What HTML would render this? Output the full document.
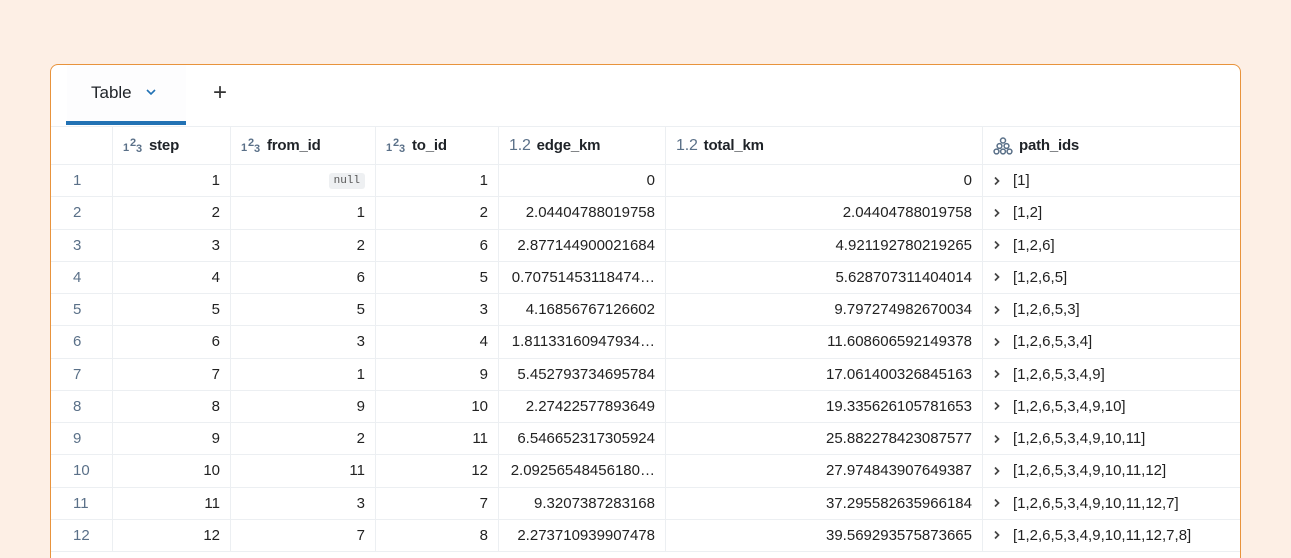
<!DOCTYPE html>
<html><head><style>
*{box-sizing:border-box;margin:0;padding:0}
html{width:1291px;height:558px;overflow:hidden}
body{width:1291px;height:558px;background:#fdefe5;overflow:hidden;font-family:"Liberation Sans",sans-serif;position:relative}
.card{position:absolute;left:50px;top:64px;width:1191px;height:520px;background:#fff;border:1px solid #e8933c;border-radius:8px;overflow:hidden}
.tab{position:absolute;left:16px;top:0;width:119px;height:60px;background:#fdfdfe}
.tab span{position:absolute;left:24px;top:18px;font-size:17px;color:#1f2328}
.tab svg{position:absolute;left:78px;top:23px}
.ul{position:absolute;left:15px;top:56px;width:120px;height:4px;background:#2272b4}
.plus{position:absolute;left:162px;top:14px;font-size:24px;color:#333}
.grid{position:absolute;left:0;top:61px;width:1191px}
.row{display:flex;height:32.25px;border-top:1px solid #eceff2}
.hdr{height:38px;border-top:1px solid #eceff2}
.c{border-left:1px solid #eceff2;font-size:15px;color:#222;display:flex;align-items:center;padding:0 10px;white-space:nowrap;overflow:hidden}
.c:first-child{border-left:none}
.r{justify-content:flex-end}
.n{color:#5a7088;justify-content:flex-start;padding-left:22px}
.hdr .c{font-size:15px;color:#1f2328;font-weight:bold;letter-spacing:-0.2px}
.ic{color:#5a7088;margin-right:6px;font-size:15px;font-weight:normal}
.i123{position:relative;display:inline-block;width:20px;height:18px;margin-right:6px;color:#5a7088;font-weight:bold}
.i123 b{position:absolute;font-size:11px}
.null{font-family:"Liberation Mono",monospace;font-size:11px;color:#555;background:#eef0f2;border-radius:3px;padding:2px 5px}
.ch{margin-right:12px;display:inline-flex}
</style></head><body>
<div class="card">
<div class="tab"><span>Table</span><svg width="12" height="8" viewBox="0 0 12 8"><path d="M2 2l4 4 4-4" stroke="#2272b4" stroke-width="1.6" fill="none"/></svg></div>
<div class="ul"></div>
<div class="plus">+</div>
<div class="grid" id="g"></div>
</div>
<script>
const w=[61,118,145,123,167,317,258];
const rows=[[1,1,null,1,"0","0","[1]"],[2,2,1,2,"2.04404788019758","2.04404788019758","[1,2]"],[3,3,2,6,"2.877144900021684","4.921192780219265","[1,2,6]"],[4,4,6,5,"0.70751453118474…","5.628707311404014","[1,2,6,5]"],[5,5,5,3,"4.16856767126602","9.797274982670034","[1,2,6,5,3]"],[6,6,3,4,"1.81133160947934…","11.608606592149378","[1,2,6,5,3,4]"],[7,7,1,9,"5.452793734695784","17.061400326845163","[1,2,6,5,3,4,9]"],[8,8,9,10,"2.27422577893649","19.335626105781653","[1,2,6,5,3,4,9,10]"],[9,9,2,11,"6.546652317305924","25.882278423087577","[1,2,6,5,3,4,9,10,11]"],[10,10,11,12,"2.09256548456180…","27.974843907649387","[1,2,6,5,3,4,9,10,11,12]"],[11,11,3,7,"9.3207387283168","37.295582635966184","[1,2,6,5,3,4,9,10,11,12,7]"],[12,12,7,8,"2.273710939907478","39.569293575873665","[1,2,6,5,3,4,9,10,11,12,7,8]"]];
const i123='<span class="i123"><b style="left:0;top:5px">1</b><b style="left:7px;top:0">2</b><b style="left:13px;top:6px">3</b></span>';
const tree='<svg class="ic" width="20" height="18" viewBox="0 0 20 18"><g fill="none" stroke="#5a7088" stroke-width="1.5"><circle cx="10" cy="3.5" r="2.5"/><circle cx="6.5" cy="9" r="2.4"/><circle cx="13.5" cy="9" r="2.4"/><circle cx="3.5" cy="14.5" r="2.4"/><circle cx="10" cy="14.5" r="2.4"/><circle cx="16.5" cy="14.5" r="2.4"/></g></svg>';
const f12='<span class="ic" style="font-size:16px">1.2</span>';
let h='<div class="row hdr">'+[["",""],[i123,"step"],[i123,"from_id"],[i123,"to_id"],[f12,"edge_km"],[f12,"total_km"],[tree,"path_ids"]].map((x,i)=>`<div class="c" style="width:${w[i]}px">${x[0]}${x[1]}</div>`).join('')+'</div>';
const chev='<span class="ch"><svg width="8" height="10" viewBox="0 0 8 10"><path d="M2 1.5l3.5 3.5L2 8.5" stroke="#444" stroke-width="1.7" fill="none"/></svg></span>';
for(const r of rows){h+='<div class="row">'+r.map((v,i)=>{let cls=i==0?'n':i==6?'':'r';let t=v===null?'<span class="null">null</span>':v;if(i==6)t=chev+v;return `<div class="c ${cls}" style="width:${w[i]}px">${t}</div>`}).join('')+'</div>';}
h+='<div class="row"></div>';
document.getElementById('g').innerHTML=h;
</script>
</body></html>
